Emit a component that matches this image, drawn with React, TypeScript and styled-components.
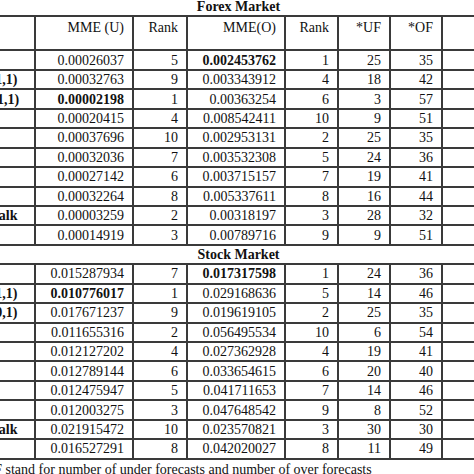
import React from 'react';
import styled, { createGlobalStyle } from 'styled-components';

const GlobalStyle = createGlobalStyle`
  html, body {
    margin: 0;
    padding: 0;
    background: #ffffff;
    overflow: hidden;
  }
  body {
    font-family: "Liberation Serif", "Times New Roman", serif;
    color: #111111;
  }
`;

const Page = styled.div`
  width: 600px;
  margin-left: -75px;
  margin-top: -3px;
`;

const Table = styled.table`
  border-collapse: collapse;
  table-layout: fixed;
  font-size: 14px;
  line-height: 17px;
`;

const Row = styled.tr`
  height: 19.45px;
`;

const HeadRow = styled.tr`
  height: 34px;
`;

const Cell = styled.td<{ $bold?: boolean }>`
  border: 2px solid #3a3a3a;
  padding: 0 8px 0 4px;
  text-align: right;
  white-space: nowrap;
  overflow: hidden;
  font-weight: ${p => (p.$bold ? 700 : 400)};
`;

const NameCell = styled(Cell)`
  text-align: left;
  font-weight: 700;
`;

const HeadCell = styled(Cell)`
  vertical-align: top;
  padding-top: 2px;
`;

const TitleCell = styled.td`
  border: none;
  text-align: center;
  font-weight: 700;
  white-space: nowrap;
  padding: 0;
`;

const Footnote = styled.div`
  font-size: 14px;
  line-height: 17px;
  padding-top: 1px;
  white-space: nowrap;
`;

type Line = [string, string, number, string, number, number, number, 'u' | 'o' | null];

const forex: Line[] = [
  ['ARIMA', '0.00026037', 5, '0.002453762', 1, 25, 35, 'o'],
  ['ARIMA(1,1,1)', '0.00032763', 9, '0.003343912', 4, 18, 42, null],
  ['EGARCH(1,1)', '0.00002198', 1, '0.00363254', 6, 3, 57, 'u'],
  ['ANN', '0.00020415', 4, '0.008542411', 10, 9, 51, null],
  ['SVR', '0.00037696', 10, '0.002953131', 2, 25, 35, null],
  ['KNN', '0.00032036', 7, '0.003532308', 5, 24, 36, null],
  ['MA', '0.00027142', 6, '0.003715157', 7, 19, 41, null],
  ['ES', '0.00032264', 8, '0.005337611', 8, 16, 44, null],
  ['Random Walk', '0.00003259', 2, '0.00318197', 3, 28, 32, null],
  ['Naive', '0.00014919', 3, '0.00789716', 9, 9, 51, null],
];

const stock: Line[] = [
  ['ARIMA', '0.015287934', 7, '0.017317598', 1, 24, 36, 'o'],
  ['ARIMA(1,1,1)', '0.010776017', 1, '0.029168636', 5, 14, 46, 'u'],
  ['ARIMA(1,0,1)', '0.017671237', 9, '0.019619105', 2, 25, 35, null],
  ['ANN', '0.011655316', 2, '0.056495534', 10, 6, 54, null],
  ['SVR', '0.012127202', 4, '0.027362928', 4, 19, 41, null],
  ['KNN', '0.012789144', 6, '0.033654615', 6, 20, 40, null],
  ['MA', '0.012475947', 5, '0.041711653', 7, 14, 46, null],
  ['ES', '0.012003275', 3, '0.047648542', 9, 8, 52, null],
  ['Random Walk', '0.021915472', 10, '0.023570821', 3, 30, 30, null],
  ['Naive', '0.016527291', 8, '0.042020027', 8, 11, 49, null],
];

const widths = [109, 98, 54, 98, 53, 52, 52, 80];

const Title: React.FC<{ text: string }> = ({ text }) => (
  <Row>
    <TitleCell />
    <TitleCell colSpan={6}>{text}</TitleCell>
    <TitleCell />
  </Row>
);

const DataRows: React.FC<{ lines: Line[] }> = ({ lines }) => (
  <>
    {lines.map(([name, u, ru, o, ro, uf, of, best]) => (
      <Row key={name}>
        <NameCell>{name}</NameCell>
        <Cell $bold={best === 'u'}>{u}</Cell>
        <Cell>{ru}</Cell>
        <Cell $bold={best === 'o'}>{o}</Cell>
        <Cell>{ro}</Cell>
        <Cell>{uf}</Cell>
        <Cell>{of}</Cell>
        <Cell />
      </Row>
    ))}
  </>
);

export default function App() {
  return (
    <>
      <GlobalStyle />
      <Page>
        <Table>
          <colgroup>
            {widths.map((w, i) => (
              <col key={i} style={{ width: w }} />
            ))}
          </colgroup>
          <tbody>
            <Title text="Forex Market" />
            <HeadRow>
              <HeadCell />
              <HeadCell>MME (U)</HeadCell>
              <HeadCell>Rank</HeadCell>
              <HeadCell>MME(O)</HeadCell>
              <HeadCell>Rank</HeadCell>
              <HeadCell>*UF</HeadCell>
              <HeadCell>*OF</HeadCell>
              <HeadCell />
            </HeadRow>
            <DataRows lines={forex} />
            <Title text="Stock Market" />
            <DataRows lines={stock} />
          </tbody>
        </Table>
        <Footnote>*UF and *OF stand for number of under forecasts and number of over forecasts</Footnote>
      </Page>
    </>
  );
}
